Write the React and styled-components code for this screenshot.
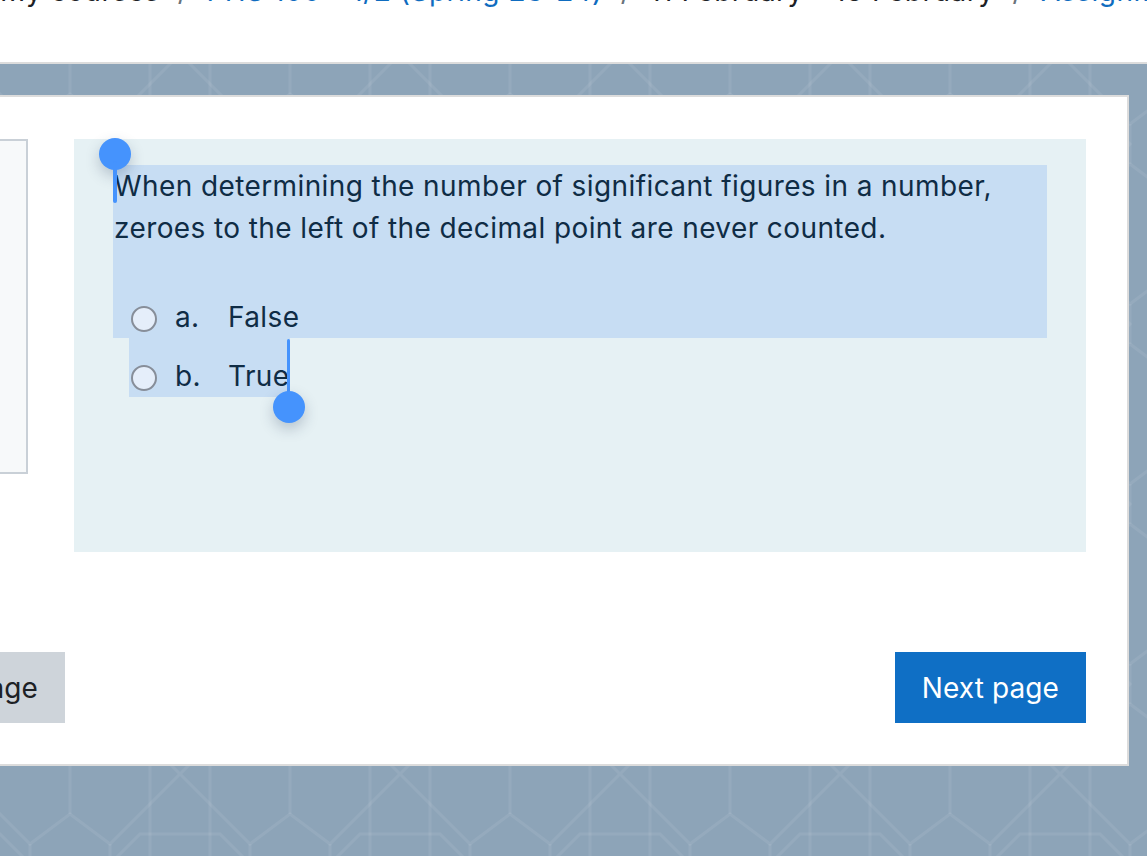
import React from "react";
import styled, { createGlobalStyle } from "styled-components";

const pattern = encodeURIComponent(
  `<svg xmlns="http://www.w3.org/2000/svg" width="220" height="180" viewBox="0 0 220 180"><g fill="none" stroke="#ffffff" stroke-opacity="0.07" stroke-width="3"><path d="M0 0 L70 70 L110 40 L150 70 L220 0"/><path d="M0 180 L70 110 L110 140 L150 110 L220 180"/><path d="M70 70 V110 M150 70 V110"/><path d="M30 0 V180 M190 0 V180"/><path d="M0 60 H40 L70 90 L40 120 H0"/><path d="M220 60 H180 L150 90 L180 120 H220"/><path d="M110 0 V40 M110 140 V180"/></g></svg>`
);

const GlobalStyle = createGlobalStyle`
  html, body {
    margin: 0;
    padding: 0;
    overflow: hidden;
    background: #8da4b8;
  }
  body {
    font-family: Inter, "Liberation Sans", sans-serif;
    color: #1d2125;
  }
`;

const Header = styled.header`
  height: 62px;
  background: #fff;
  border-bottom: 2px solid #dcdcdc;
  overflow: hidden;
`;

// only the bottom of the breadcrumb is still on screen
const Crumbs = styled.nav`
  display: flex;
  align-items: baseline;
  margin: -26px 0 0 0;
  white-space: nowrap;
  font-size: 28px;
  line-height: 34px;
  letter-spacing: 0.5px;
`;

const Crumb = styled.span`
  color: ${(p) => (p.link ? "#0f6cbf" : "#1d2125")};
`;

const Sep = styled.span`
  color: #6a737b;
  margin: 0 18px;
`;

const Page = styled.main`
  min-height: calc(100vh - 64px);
  padding: 31px 18px 90px 0;
  box-sizing: border-box;
  background: #8da4b8 url("data:image/svg+xml,${pattern}");
  background-position: -40px -10px;
`;

const Card = styled.section`
  margin-left: -200px;
  background: #fff;
  border: 2px solid #dcdcdc;
  padding: 42px 41px 41px 0;
`;

const QuizRow = styled.div`
  display: flex;
  align-items: flex-start;
  gap: 46px;
`;

const NavBlock = styled.aside`
  width: 224px;
  height: 331px;
  background: #f7f9fa;
  border: 2px solid #c9d0d7;
  border-left: none;
`;

const Question = styled.div`
  position: relative;
  flex: 1;
  height: 413px;
  box-sizing: border-box;
  padding: 26px 0 0 39px;
  background: #e6f1f4;
  color: #0f2c45;
  font-size: 28px;
  letter-spacing: 0.4px;
`;

const Selected = styled.div`
  width: 934px;
  background: #c7ddf3;
`;

const QText = styled.p`
  margin: 0;
  padding-left: 1px;
  line-height: 42px;
`;

const Answers = styled.div`
  margin-top: 30px;
`;

const Option = styled.div`
  display: flex;
  height: 59px;
  padding-left: 16px;
`;

const Marked = styled.div`
  display: flex;
  align-items: center;
  padding-top: 17px;
  height: 42px;
  background: ${(p) => (p.highlight ? "#c7ddf3" : "transparent")};
`;

const Radio = styled.span`
  width: 22px;
  height: 22px;
  margin: 3px 18px 0 2px;
  border-radius: 50%;
  border: 2.5px solid #878e99;
  background: #e5eefa;
`;

const Letter = styled.span`
  width: 53px;
`;

const Handle = styled.span`
  position: absolute;
  left: ${(p) => p.x}px;
  top: ${(p) => p.y}px;
  width: 32px;
  height: 32px;
  border-radius: 50%;
  background: #4593fd;
  box-shadow: 0 6px 14px rgba(40, 60, 90, 0.25);
`;

const Caret = styled.span`
  position: absolute;
  left: ${(p) => p.x}px;
  top: ${(p) => p.y}px;
  width: ${(p) => p.w}px;
  height: ${(p) => p.h}px;
  border-radius: 2px;
  background: #4593fd;
`;

const NavRow = styled.div`
  display: grid;
  grid-template-columns: 263px 1fr auto;
  margin-top: 100px;
`;

const Button = styled.button`
  height: 71px;
  padding: 0 27px;
  border: none;
  border-radius: 0;
  font-family: Inter, "Liberation Sans", sans-serif;
  font-size: 28px;
  letter-spacing: 0.1px;
  background: ${(p) => (p.primary ? "#0f6fc5" : "#ced4da")};
  color: ${(p) => (p.primary ? "#fff" : "#1d2125")};
  justify-self: end;
  grid-column: ${(p) => (p.primary ? 3 : 1)};
`;

export default function App() {
  return (
    <>
      <GlobalStyle />
      <Header>
        <Crumbs>
          <Crumb>My courses</Crumb>
          <Sep>/</Sep>
          <Crumb link>PHS 100 - 1/2 (Spring 23-24)</Crumb>
          <Sep>/</Sep>
          <Crumb>11 February - 18 February</Crumb>
          <Sep>/</Sep>
          <Crumb link>Assignment</Crumb>
        </Crumbs>
      </Header>
      <Page>
        <Card>
          <QuizRow>
            <NavBlock />
            <Question>
              <Selected>
                <QText>
                  When determining the number of significant figures in a number,
                  <br />
                  zeroes to the left of the decimal point are never counted.
                </QText>
                <Answers>
                  <Option>
                    <Marked>
                      <Radio />
                      <Letter>a.</Letter>
                      <span>False</span>
                    </Marked>
                  </Option>
                </Answers>
              </Selected>
              <Option>
                <Marked highlight>
                  <Radio />
                  <Letter>b.</Letter>
                  <span>True</span>
                </Marked>
              </Option>
              <Handle x={25} y={-1} />
              <Caret x={39} y={22} w={4} h={42} />
              <Caret x={213} y={200} w={3} h={58} />
              <Handle x={199} y={252} />
            </Question>
          </QuizRow>
          <NavRow>
            <Button>Previous page</Button>
            <Button primary>Next page</Button>
          </NavRow>
        </Card>
      </Page>
    </>
  );
}
